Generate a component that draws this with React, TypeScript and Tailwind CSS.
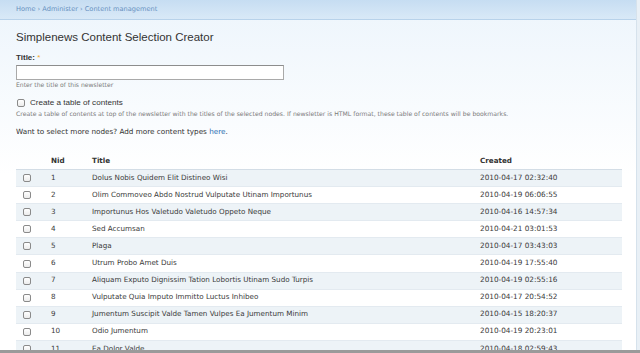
import React from 'react';

type Node = {
  nid: number;
  title: string;
  created: string;
};

const nodes: Node[] = [
  { nid: 1, title: 'Dolus Nobis Quidem Elit Distineo Wisi', created: '2010-04-17 02:32:40' },
  { nid: 2, title: 'Olim Commoveo Abdo Nostrud Vulputate Utinam Importunus', created: '2010-04-19 06:06:55' },
  { nid: 3, title: 'Importunus Hos Valetudo Valetudo Oppeto Neque', created: '2010-04-16 14:57:34' },
  { nid: 4, title: 'Sed Accumsan', created: '2010-04-21 03:01:53' },
  { nid: 5, title: 'Plaga', created: '2010-04-17 03:43:03' },
  { nid: 6, title: 'Utrum Probo Amet Duis', created: '2010-04-19 17:55:40' },
  { nid: 7, title: 'Aliquam Exputo Dignissim Tation Lobortis Utinam Sudo Turpis', created: '2010-04-19 02:55:16' },
  { nid: 8, title: 'Vulputate Quia Imputo Immitto Luctus Inhibeo', created: '2010-04-17 20:54:52' },
  { nid: 9, title: 'Jumentum Suscipit Valde Tamen Vulpes Ea Jumentum Minim', created: '2010-04-15 18:20:37' },
  { nid: 10, title: 'Odio Jumentum', created: '2010-04-19 20:23:01' },
  { nid: 11, title: 'Ea Dolor Valde', created: '2010-04-18 02:59:43' },
];

const Checkbox: React.FC = () => (
  <span className="inline-block h-[8px] w-[8px] rounded-[2px] border border-[#8a8a8a] bg-gradient-to-b from-white to-[#ececec]" />
);

export default function App() {
  return (
    <div className="flex h-[353px] w-[640px] flex-col overflow-hidden bg-[#eef4f9] font-['DejaVu_Sans',sans-serif] text-[#333]">
      <div className="flex min-h-0 flex-1">
        <div className="min-w-0 flex-1 overflow-hidden border-r border-[#d6e2ec] bg-gradient-to-b from-[#edf5fc] via-white to-white">
          {/* breadcrumb */}
          <div className="flex h-[20px] items-center border-b border-[#b8d2ea] bg-gradient-to-b from-[#c6ddf2] to-[#d9e9f7] pl-[16px] text-[6.6px] text-[#6690bf]">
            Home › Administer › Content management
          </div>

          <div className="pl-[16px] pr-[18px]">
            <h1 className="mt-[10px] font-['Liberation_Sans',sans-serif] text-[11.5px] leading-[14px] text-[#333]">
              Simplenews Content Selection Creator
            </h1>

            <div className="mt-[9px] font-['Liberation_Sans',sans-serif] text-[8px] font-bold leading-[10px] text-[#333]">
              Title: <span className="font-normal text-[#f0a92e]">*</span>
            </div>
            <input
              type="text"
              className="mt-[2px] block h-[15px] w-[268px] border border-[#a9a9a9] border-t-[#8d8d8d] bg-white outline-none"
            />
            <div className="mt-[1px] text-[6.1px] leading-[8px] text-[#7a7a7a]">Enter the title of this newsletter</div>

            <label className="mt-[9px] flex h-[10px] items-center gap-[5px] pl-[1px]">
              <Checkbox />
              <span className="font-['Liberation_Sans',sans-serif] text-[8.1px] leading-[10px] text-[#333]">
                Create a table of contents
              </span>
            </label>
            <div className="mt-[2px] whitespace-nowrap text-[6.15px] leading-[8px] text-[#7a7a7a]">
              Create a table of contents at top of the newsletter with the titles of the selected nodes. If newsletter is HTML
              format, these table of contents will be bookmarks.
            </div>

            <div className="mt-[9px] text-[7.25px] leading-[10px] text-[#333]">
              Want to select more nodes? Add more content types <span className="text-[#2c6fb2]">here</span>.
            </div>

            <div className="mt-[17px] w-[606px] text-[7.2px]">
              <div className="grid h-[16px] grid-cols-[35px_41px_388px_1fr] items-center border-b border-[#d3dde6] font-bold text-[#333]">
                <div />
                <div>Nid</div>
                <div>Title</div>
                <div>Created</div>
              </div>
              {nodes.map((node, i) => (
                <div
                  key={node.nid}
                  className={
                    i % 2 === 0
                      ? 'grid h-[17.1px] grid-cols-[35px_41px_388px_1fr] items-center border-b border-[#e3eaf0] bg-[#edf3f7] text-[#3a3a3a]'
                      : 'grid h-[17.1px] grid-cols-[35px_41px_388px_1fr] items-center border-b border-[#e3eaf0] bg-white text-[#3a3a3a]'
                  }
                >
                  <div className="flex items-center pl-[7px]">
                    <Checkbox />
                  </div>
                  <div>{node.nid}</div>
                  <div className="whitespace-nowrap">{node.title}</div>
                  <div className="whitespace-nowrap text-[7.3px]">{node.created}</div>
                </div>
              ))}
            </div>
          </div>
        </div>
        <div className="w-[3px] bg-[#e9f0f6]" />
      </div>
      <div className="h-[3px] shrink-0 bg-[#9a9a9a]" />
    </div>
  );
}
